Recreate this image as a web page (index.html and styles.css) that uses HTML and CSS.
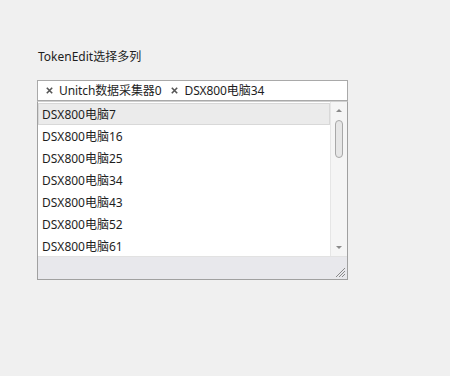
FILE: index.html
```html
<!DOCTYPE html>
<html lang="en">
<head>
    <meta charset="utf-8">
    <title>TokenEdit</title>
    <link rel="stylesheet" href="styles.css">
</head>
<body>
    <div class="form">
        <div class="caption">TokenEdit选择多列</div>
        <div class="token-edit">
            <span class="token">
                <svg class="token-x" width="7" height="7" viewBox="0 0 7 7"><path d="M0.8 0.8 L6.2 6.2 M6.2 0.8 L0.8 6.2" stroke="#555" stroke-width="1.6"/></svg>
                Unitch数据采集器0
            </span>
            <span class="token">
                <svg class="token-x" width="7" height="7" viewBox="0 0 7 7"><path d="M0.8 0.8 L6.2 6.2 M6.2 0.8 L0.8 6.2" stroke="#555" stroke-width="1.6"/></svg>
                DSX800电脑34
            </span>
        </div>
        <div class="popup">
            <div class="list-wrap">
                <div class="list">
                    <div class="item hot">DSX800电脑7</div>
                    <div class="item">DSX800电脑16</div>
                    <div class="item">DSX800电脑25</div>
                    <div class="item">DSX800电脑34</div>
                    <div class="item">DSX800电脑43</div>
                    <div class="item">DSX800电脑52</div>
                    <div class="item">DSX800电脑61</div>
                </div>
                <div class="vscroll">
                    <div class="arrow up"></div>
                    <div class="track"><div class="thumb"></div></div>
                    <div class="arrow down"></div>
                </div>
            </div>
            <div class="footer">
                <svg class="grip" width="11" height="11" viewBox="0 0 11 11">
                    <path d="M10 1 L1 10 M10 4 L4 10 M10 7 L7 10" stroke="#8a8a8a" stroke-width="1"/>
                </svg>
            </div>
        </div>
    </div>
</body>
</html>
```

FILE: styles.css
```css
body
{
    margin: 0;
    background: #f0f0f0;
    font-family: "Noto Sans", "Noto Sans CJK SC", sans-serif;
    font-size: 12px;
    color: #1e1e1e;
}
.form
{
    padding: 48px 0 0 37px;
    width: 311px;
}
.caption
{
    height: 18px;
    line-height: 18px;
    padding-left: 1px;
    margin-bottom: 14px;
}
.token-edit
{
    height: 19px;
    border: 1px solid #a9a9a9;
    background: #fff;
    display: flex;
    align-items: center;
    padding-left: 8px;
    gap: 10px;
    white-space: nowrap;
    letter-spacing: -0.1px;
}
.token
{
    display: flex;
    align-items: center;
    line-height: 16px;
    gap: 6px;
}
.popup
{
    border: 1px solid #a0a0a0;
    border-top: 1px solid #d0d0d0;
    background: #fff;
}
.list-wrap
{
    display: flex;
    height: 154px;
}
.list
{
    flex: 1;
    padding-top: 1px;
}
.item
{
    height: 22px;
    line-height: 22px;
    padding-left: 3px;
    border: 1px solid transparent;
    box-sizing: border-box;
}
.item.hot
{
    background: #ebebeb;
    border-color: #d8d8d8;
}
.vscroll
{
    width: 16px;
    background: #f5f5f5;
    border-left: 1px solid #e6e6e6;
    display: flex;
    flex-direction: column;
    align-items: center;
}
.arrow
{
    height: 17px;
    width: 16px;
    display: flex;
    align-items: center;
    justify-content: center;
}
.arrow::after
{
    content: "";
    border-left: 3px solid transparent;
    border-right: 3px solid transparent;
}
.arrow.up::after
{
    border-bottom: 3px solid #8a8a8a;
}
.arrow.down::after
{
    border-top: 3px solid #8a8a8a;
}
.track
{
    flex: 1;
    width: 16px;
    display: flex;
    justify-content: center;
}
.thumb
{
    width: 6px;
    height: 36px;
    margin-top: 1px;
    border: 1px solid #a8a8a8;
    border-radius: 4px;
    background: #e6e6e6;
}
.footer
{
    height: 21px;
    background: #e8e8ec;
    border-top: 1px solid #e2e2e2;
    display: flex;
    justify-content: flex-end;
    align-items: flex-end;
    padding: 0 1px 1px 0;
}
```
